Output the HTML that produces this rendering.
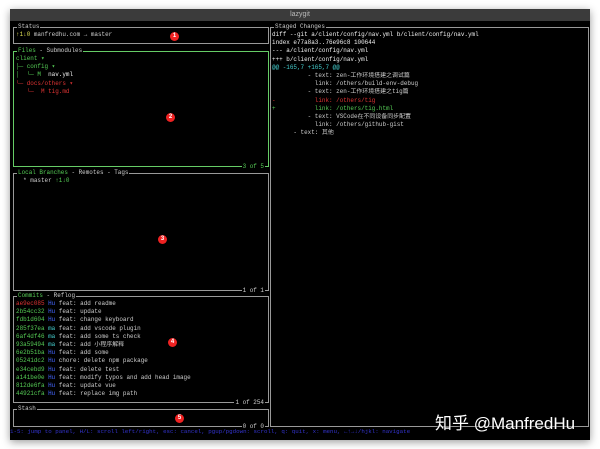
<!DOCTYPE html><html><head><style>
body{margin:0;width:600px;height:449px;background:#fff;position:relative;overflow:hidden;font-family:"Liberation Mono","Noto Sans CJK SC",monospace;font-size:5.95px;color:#ccc}
#win{position:absolute;left:10px;top:9px;width:580px;height:431px;background:#000;box-shadow:0 2px 8px rgba(0,0,0,.4)}
#tb{position:absolute;left:0;top:0;width:580px;height:12px;background:#3b3b3b;color:#bbb;text-align:center;font:7px "Liberation Sans",sans-serif;line-height:12px}
.p{position:absolute;border:1px solid #999}
.g{border-color:#6c6}
.t{position:absolute;top:-5px;left:3px;background:#000;line-height:8px;padding:0 1px}
.f{position:absolute;bottom:-5px;right:3px;background:#000;line-height:8px;padding:0 1px}
.c{position:absolute;left:2px;top:3px;line-height:8.2px;white-space:pre}
.gr{color:#5c5}.rd{color:#d33}.bl{color:#46f}.cy{color:#4cc}.w{color:#eee}
.b{position:absolute;width:9px;height:9px;border-radius:50%;background:#e22;color:#fff;font:bold 6px "Liberation Sans",sans-serif;text-align:center;line-height:9px}
</style></head><body><div id="win">
<div id="tb">lazygit</div>
<div class="p" style="left:3px;top:18px;width:254px;height:15px"><span class="t">Status</span><div class="c"><span style="color:#dd5">↑1↓0</span> manfredhu.com → master</div></div>
<div class="p g" style="left:3px;top:42px;width:254px;height:114px"><span class="t"><span class="gr">Files</span> - Submodules</span><span class="f gr">3 of 5</span><div class="c"><span class="gr">client ▾</span>
<span class="gr">├─ config ▾</span>
<span class="gr">│  └─ M  </span><span class="w">nav.yml</span>
<span class="rd">└─ docs/others ▾</span>
<span class="rd">   └─  M tig.md</span></div></div>
<div class="p" style="left:3px;top:164px;width:254px;height:116px"><span class="t"><span class="gr">Local Branches</span> - Remotes - Tags</span><span class="f">1 of 1</span><div class="c">  * master <span class="gr">↑1↓0</span></div></div>
<div class="p" style="left:3px;top:287px;width:254px;height:105px"><span class="t"><span class="gr">Commits</span> - Reflog</span><span class="f">1 of 254</span><div class="c"><span class="rd">ae9ec085</span> <span class="bl">Hu</span> feat: add readme
<span class="gr">2b54cc32</span> <span class="bl">Hu</span> feat: update
<span class="gr">fdb1d604</span> <span class="bl">Hu</span> feat: change keyboard
<span class="gr">285f37ea</span> <span class="cy">ma</span> feat: add vscode plugin
<span class="gr">6af4df46</span> <span class="cy">ma</span> feat: add some ts check
<span class="gr">93a59494</span> <span class="cy">ma</span> feat: add 小程序解释
<span class="gr">6e2b51ba</span> <span class="bl">Hu</span> feat: add some
<span class="gr">05241dc2</span> <span class="bl">Hu</span> chore: delete npm package
<span class="gr">e34cebd9</span> <span class="bl">Hu</span> feat: delete test
<span class="gr">a141be0e</span> <span class="bl">Hu</span> feat: modify typos and add head image
<span class="gr">812de6fa</span> <span class="bl">Hu</span> feat: update vue
<span class="gr">44921cfa</span> <span class="bl">Hu</span> feat: replace img path</div></div>
<div class="p" style="left:3px;top:400px;width:254px;height:16px"><span class="t">Stash</span><span class="f">0 of 0</span></div>
<div class="p" style="left:260px;top:18px;width:317px;height:398px"><span class="t">Staged Changes</span><div class="c" style="left:1px"><span class="w">diff --git a/client/config/nav.yml b/client/config/nav.yml
index e77a8a3..76e96c8 100644
--- a/client/config/nav.yml
+++ b/client/config/nav.yml</span>
<span class="cy">@@ -165,7 +165,7 @@</span>
          - text: zen-工作环境搭建之调试篇
            link: /others/build-env-debug
          - text: zen-工作环境搭建之tig篇
<span class="rd">-           link: /others/tig</span>
<span class="gr">+           link: /others/tig.html</span>
          - text: VSCode在不同设备同步配置
            link: /others/github-gist
      - text: 其他</div></div>
<div style="position:absolute;left:0;top:419px;width:580px;line-height:8px;color:#33c;white-space:pre;font-size:5.8px">1-5: jump to panel, H/L: scroll left/right, esc: cancel, pgup/pgdown: scroll, q: quit, x: menu, ←↑→↓/hjkl: navigate</div>
<div class="b" style="left:160px;top:23px">1</div>
<div class="b" style="left:156px;top:104px">2</div>
<div class="b" style="left:148px;top:226px">3</div>
<div class="b" style="left:158px;top:329px">4</div>
<div class="b" style="left:165px;top:405px">5</div>
<div style="position:absolute;left:425px;top:400px;color:#fff;font:17px 'Liberation Sans','Noto Sans CJK SC',sans-serif;text-shadow:0 0 2px #000">知乎 @ManfredHu</div>
</div></body></html>
